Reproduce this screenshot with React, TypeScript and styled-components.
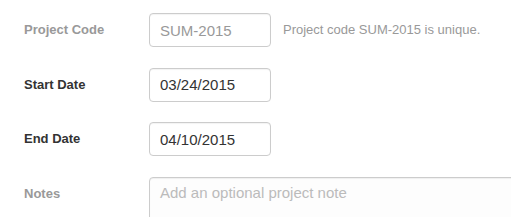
import React from "react";
import styled, { createGlobalStyle } from "styled-components";

const Global = createGlobalStyle`
  html, body { margin: 0; padding: 0; background: #fff; }
  body { font-family: "Liberation Sans", Arial, sans-serif; overflow: hidden; }
`;

const Form = styled.form`
  display: flex;
  flex-direction: column;
  gap: 20.5px;
  padding: 13px 0 0 24px;
  width: 600px;
`;

const Row = styled.div`
  display: flex;
  align-items: flex-start;
`;

const Label = styled.label<{ $muted?: boolean }>`
  width: 125px;
  flex: none;
  height: 34px;
  line-height: 34px;
  font-size: 13px;
  font-weight: bold;
  color: ${(p) => (p.$muted ? "#999" : "#333")};
`;

const Input = styled.input<{ $readonly?: boolean }>`
  box-sizing: border-box;
  width: 122px;
  height: 34px;
  padding: 0 10px;
  border: 1px solid #ccc;
  border-radius: 4px;
  background: #fff;
  font-family: "Liberation Sans", Arial, sans-serif;
  font-size: 15px;
  color: ${(p) => (p.$readonly ? "#999" : "#333")};
  outline: none;
  box-shadow: inset 0 1px 1px rgba(0, 0, 0, 0.05);
`;

const Help = styled.span`
  margin-left: 12px;
  line-height: 34px;
  font-size: 13px;
  color: #999;
`;

const NoteArea = styled.textarea`
  box-sizing: border-box;
  width: 420px;
  height: 80px;
  padding: 6px 10px;
  border: 1px solid #ccc;
  border-radius: 4px;
  background: #fdfdfd;
  font-family: "Liberation Sans", Arial, sans-serif;
  font-size: 15px;
  color: #333;
  resize: none;
  outline: none;
  box-shadow: inset 0 1px 1px rgba(0, 0, 0, 0.06);
  &::placeholder { color: #bbb; }
`;

export default function App() {
  return (
    <>
      <Global />
      <Form>
        <Row>
          <Label $muted>Project Code</Label>
          <Input $readonly readOnly defaultValue="SUM-2015" />
          <Help>Project code SUM-2015 is unique.</Help>
        </Row>
        <Row>
          <Label>Start Date</Label>
          <Input defaultValue="03/24/2015" />
        </Row>
        <Row>
          <Label>End Date</Label>
          <Input defaultValue="04/10/2015" />
        </Row>
        <Row>
          <Label $muted>Notes</Label>
          <NoteArea placeholder="Add an optional project note" />
        </Row>
      </Form>
    </>
  );
}
